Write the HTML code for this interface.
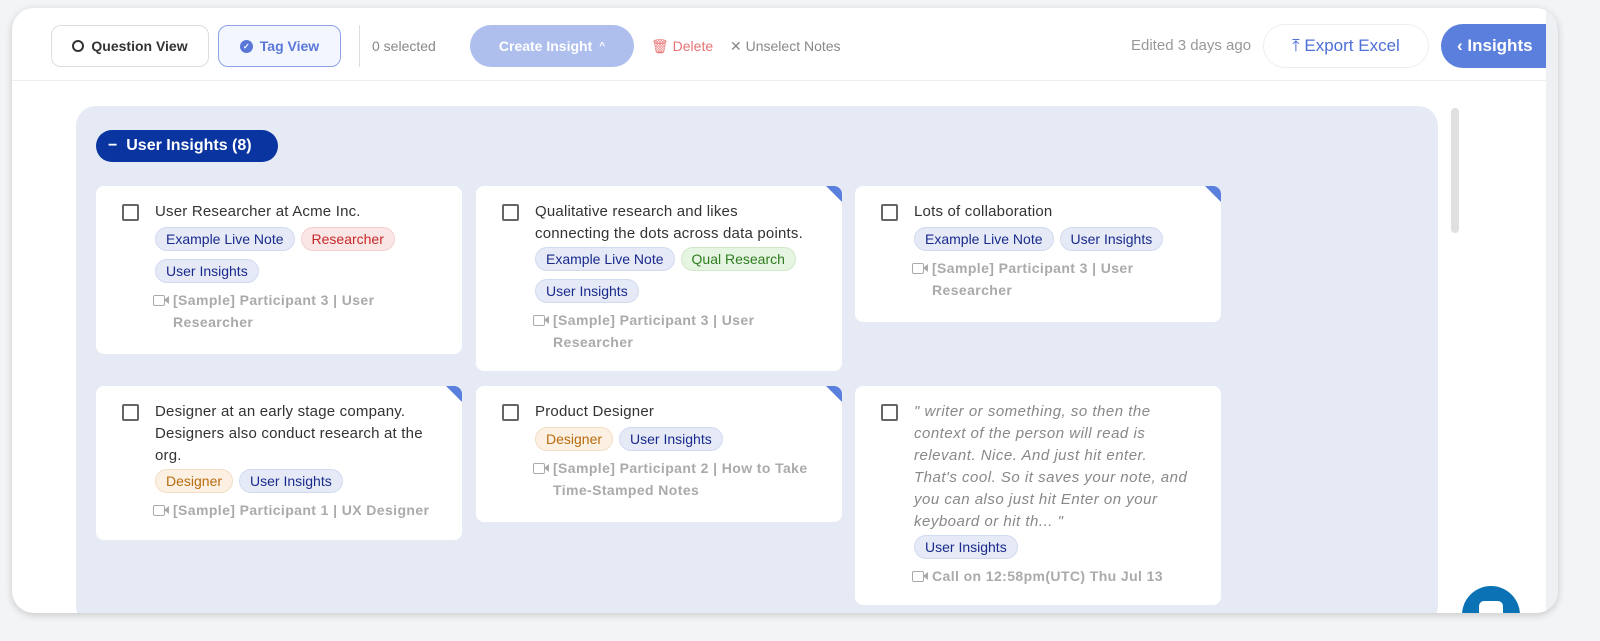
<!DOCTYPE html>
<html><head><style>
*{box-sizing:border-box;margin:0;padding:0}
body{width:1600px;height:641px;background:#f3f4f6;font-family:"Liberation Sans",sans-serif;position:relative;overflow:hidden}
.frame{position:absolute;left:12px;top:8px;width:1546px;height:605px;background:#fff;border-radius:22px;box-shadow:0 2px 8px rgba(0,0,0,.18);overflow:hidden}
.a{position:absolute}
.btn{position:absolute;height:42px;border-radius:10px;font-size:14px;font-weight:bold;display:flex;align-items:center;justify-content:center;gap:7px}
.panel{position:absolute;left:64px;top:98px;width:1362px;height:520px;background:#e5eaf4;border-radius:20px}
.card{position:absolute;width:366px;background:#fff;border-radius:8px;overflow:hidden}
.card .cb{position:absolute;left:26px;top:18px;width:17px;height:17px;border:2px solid #666;border-radius:2px}
.card .body{position:absolute;left:59px;top:15px;right:26px;font-size:15px;letter-spacing:0.2px;line-height:22px;color:#333}
.tags{display:flex;flex-wrap:wrap;gap:8px 6px;margin:4px 0 6px;letter-spacing:0}
.tag{height:24px;line-height:22px;padding:0 10px;border-radius:12px;font-size:14px;border:1px solid}
.t-b{background:#e5eaf6;color:#1a2a8c;border-color:#d2daf0}
.t-r{background:#fbe6e6;color:#c62828;border-color:#f4cfcf}
.t-g{background:#e6f4e2;color:#2e7d1f;border-color:#cfe8c8}
.t-o{background:#fbf0e2;color:#b86b0f;border-color:#f1dec5}
.src{color:#aaa;font-weight:bold;font-size:14px;letter-spacing:0.4px;line-height:22px;padding-left:18px;position:relative;padding-right:8px}
.src:before{content:"";position:absolute;left:-2px;top:6px;width:10px;height:9px;border:1.5px solid #aaa;border-radius:2px}
.src:after{content:"";position:absolute;left:9px;top:7px;border-right:5px solid #aaa;border-top:4px solid transparent;border-bottom:4px solid transparent}
.corner{position:absolute;right:0;top:0;width:0;height:0;border-top:16px solid #5b7fdc;border-left:16px solid transparent}
</style></head><body>
<div class="frame">
 <div class="a" style="left:0;top:72px;width:1546px;height:1px;background:#eee"></div>
 <div class="btn" style="left:39px;top:17px;width:158px;border:1px solid #ddd;color:#333"><span style="width:12px;height:12px;border:2px solid #333;border-radius:50%"></span>Question View</div>
 <div class="btn" style="left:206px;top:17px;width:123px;border:1px solid #8da3e6;background:#f3f6ff;color:#5a78d8"><span style="width:13px;height:13px;background:#5a78d8;border-radius:50%;color:#fff;font-size:8px;line-height:13px;text-align:center">✓</span>Tag View</div>
 <div class="a" style="left:347px;top:17px;width:1px;height:42px;background:#ddd"></div>
 <div class="a" style="left:360px;top:30px;font-size:14px;color:#888">0 selected</div>
 <div class="btn" style="left:458px;top:17px;width:164px;border-radius:21px;background:#aebfee;color:#fff">Create Insight <span style="font-size:10px">^</span></div>
 <div class="a" style="left:639px;top:30px;font-size:14px;color:#e57373">🗑 Delete</div>
 <div class="a" style="left:718px;top:30px;font-size:14px;color:#888">✕ Unselect Notes</div>
 <div class="a" style="left:1119px;top:29px;font-size:15px;color:#999">Edited 3 days ago</div>
 <div class="btn" style="left:1251px;top:16px;width:166px;height:44px;border-radius:22px;border:1px solid #eee;color:#4d6fd6;font-size:17px;font-weight:normal">⤒ Export Excel</div>
 <div class="btn" style="left:1429px;top:16px;width:120px;height:44px;border-radius:22px 0 0 22px;background:#5b7fdc;color:#fff;font-size:17px;justify-content:flex-start;padding-left:16px">‹ Insights</div>
 <div class="a" style="left:1534px;top:0;width:12px;height:605px;background:#eef0f3"></div>
 <div class="panel"></div>
 <div class="a" style="left:1439px;top:100px;width:8px;height:125px;background:#e0e0e0;border-radius:4px"></div>
 <div class="a" style="left:84px;top:122px;width:182px;height:32px;border-radius:16px;background:#0a35a0;color:#fff;font-size:16px;font-weight:bold;line-height:32px;padding-left:12px">−&nbsp; User Insights (8)</div>

 <div class="card" style="left:84px;top:178px;height:168px"><div class="cb"></div><div class="body">User Researcher at Acme Inc.<div class="tags"><span class="tag t-b">Example Live Note</span><span class="tag t-r">Researcher</span><span class="tag t-b">User Insights</span></div><div class="src">[Sample] Participant 3 | User Researcher</div></div></div>
 <div class="card" style="left:464px;top:178px;height:185px"><div class="corner"></div><div class="cb"></div><div class="body">Qualitative research and likes connecting the dots across data points.<div class="tags" style="margin-top:2px"><span class="tag t-b">Example Live Note</span><span class="tag t-g">Qual Research</span><span class="tag t-b">User Insights</span></div><div class="src">[Sample] Participant 3 | User Researcher</div></div></div>
 <div class="card" style="left:843px;top:178px;height:136px"><div class="corner"></div><div class="cb"></div><div class="body">Lots of collaboration<div class="tags"><span class="tag t-b">Example Live Note</span><span class="tag t-b">User Insights</span></div><div class="src">[Sample] Participant 3 | User Researcher</div></div></div>

 <div class="card" style="left:84px;top:378px;height:154px"><div class="corner"></div><div class="cb"></div><div class="body">Designer at an early stage company. Designers also conduct research at the org.<div class="tags" style="margin-top:2px"><span class="tag t-o">Designer</span><span class="tag t-b">User Insights</span></div><div class="src" style="padding-right:0">[Sample] Participant 1 | UX Designer</div></div></div>
 <div class="card" style="left:464px;top:378px;height:136px"><div class="corner"></div><div class="cb"></div><div class="body">Product Designer<div class="tags"><span class="tag t-o">Designer</span><span class="tag t-b">User Insights</span></div><div class="src">[Sample] Participant 2 | How to Take Time-Stamped Notes</div></div></div>
 <div class="card" style="left:843px;top:378px;height:219px"><div class="cb"></div><div class="body"><i style="color:#888;letter-spacing:0.5px">" writer or something, so then the context of the person will read is relevant. Nice. And just hit enter. That's cool. So it saves your note, and you can also just hit Enter on your keyboard or hit th... "</i><div class="tags" style="margin-top:2px"><span class="tag t-b">User Insights</span></div><div class="src">Call on 12:58pm(UTC) Thu Jul 13</div></div></div>

 <div class="a" style="left:1450px;top:578px;width:58px;height:58px;border-radius:50%;background:#0b72b5"><div class="a" style="left:17px;top:15px;width:24px;height:20px;background:#fff;border-radius:5px"></div></div>
</div>
</body></html>
